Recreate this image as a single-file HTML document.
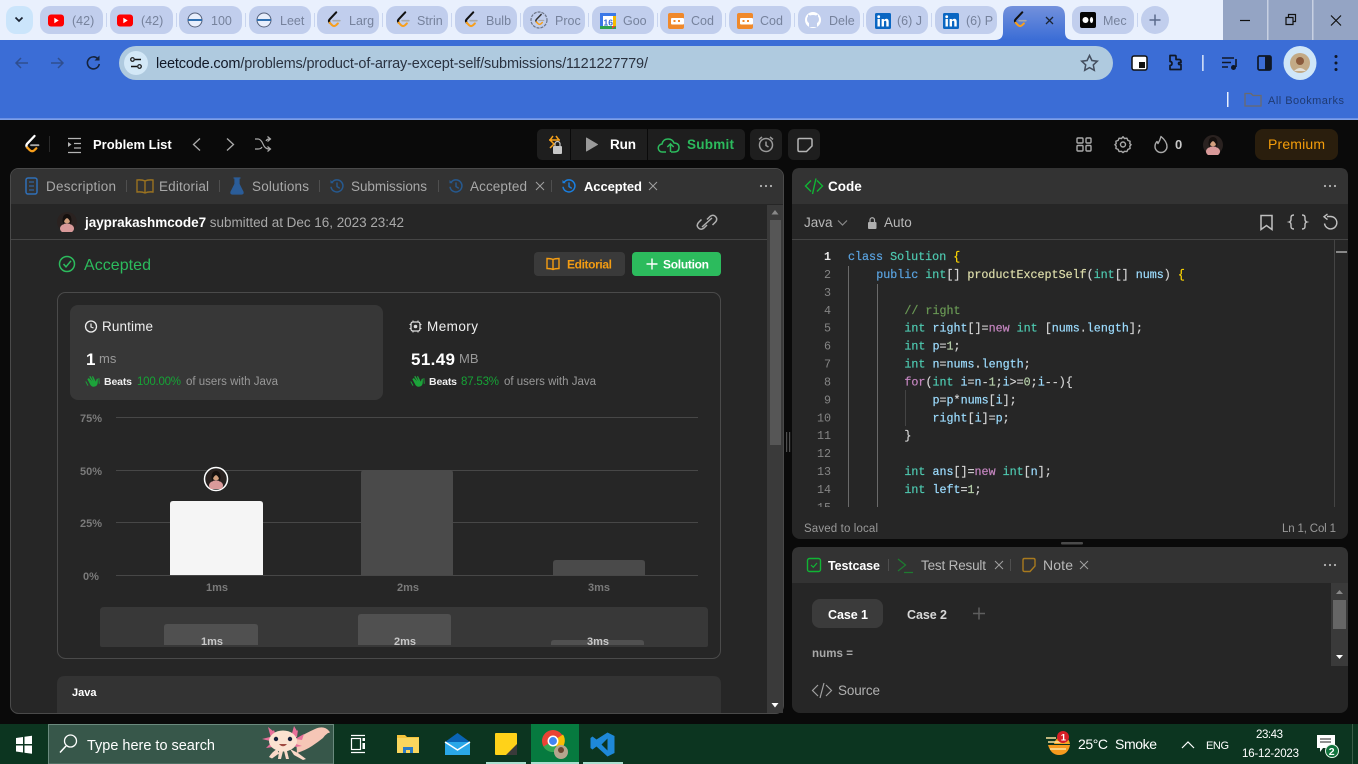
<!DOCTYPE html>
<html lang="en"><head><meta charset="utf-8"><title>Product of Array Except Self - LeetCode</title>
<style>
html,body{margin:0;padding:0;width:1358px;height:764px;overflow:hidden;background:#0a0a0a}
svg{display:block}
text{font-family:"Liberation Sans",sans-serif;white-space:pre}
.tab{font-size:12.5px;fill:#76829c}
.w{fill:#fff}.b{font-weight:700}
.g{fill:#a8a8a8}
.nav{font-size:13.5px}
.ic{fill:none;stroke:#a9a9a9;stroke-width:1.4;stroke-linecap:round;stroke-linejoin:round}
.ax{font-size:11px;fill:#7a7a7a;font-weight:700}
.c{font-family:"Liberation Mono",monospace;font-size:11.7px;fill:#d4d4d4;stroke:#d4d4d4;stroke-width:.2}
.n{font-family:"Liberation Mono",monospace;font-size:11.7px;fill:#858585;text-anchor:end}
.k{fill:#5aa3e0;stroke:#5aa3e0}.t{fill:#4ec9b0;stroke:#4ec9b0}.f{fill:#dcdcaa;stroke:#dcdcaa}.v{fill:#9cdcfe;stroke:#9cdcfe}.p{fill:#c586c0;stroke:#c586c0}.o{fill:#ffd700;stroke:#ffd700}.u{fill:#b5cea8;stroke:#b5cea8}.m{fill:#6a9955;stroke:#6a9955}
.tb{fill:#fff;font-size:14.5px}
</style></head><body>
<svg xmlns="http://www.w3.org/2000/svg" width="1358" height="764" viewBox="0 0 1358 764">
<defs>
<symbol id="yt" viewBox="0 0 16 13"><rect width="16" height="12" y="0.5" rx="3" fill="#f00"/><path d="M6.3 3.8l4.4 2.7-4.4 2.7z" fill="#fff"/></symbol>
<symbol id="ll" viewBox="0 0 16 16"><circle cx="8" cy="8" r="7" fill="#e8eefc" stroke="#56627c" stroke-width="1"/><path d="M1 8h14" stroke="#2f6fb0" stroke-width="2"/></symbol>
<symbol id="lc" viewBox="0 0 20 20"><path d="M12.5 1.5L5.2 9.2Q3.6 11 5.2 13" fill="none" stroke="currentColor" stroke-width="2.3" stroke-linecap="round"/><path d="M5.2 13l2.6 2.7q2.2 2 4.6 0l1.9-1.9" fill="none" stroke="#f89f1b" stroke-width="2.3" stroke-linecap="round"/><path d="M9 10.7h7.5" fill="none" stroke="#a8a8a8" stroke-width="1.8" stroke-linecap="round"/></symbol>
<symbol id="cd" viewBox="0 0 16 16"><rect width="16" height="16" rx="2" fill="#f0892b"/><rect x="3" y="5" width="13" height="6.5" rx="1" fill="#fff"/><rect x="5.5" y="7" width="2" height="2" fill="#f0892b"/><rect x="10" y="7" width="2" height="2" fill="#f0892b"/></symbol>
<symbol id="li" viewBox="0 0 16 16"><rect width="16" height="16" rx="1.5" fill="#0a66c2"/><rect x="2.5" y="6" width="2.4" height="7.5" fill="#fff"/><circle cx="3.7" cy="3.7" r="1.4" fill="#fff"/><path d="M6.6 6h2.3v1.1q.8-1.3 2.4-1.3 2.4 0 2.4 2.9v4.8h-2.4V9.1q0-1.4-1.2-1.4T9 9.1v4.4H6.6z" fill="#fff"/></symbol>
<symbol id="hist" viewBox="0 0 16 16"><path d="M3.2 4.2A6 6 0 1 1 2.1 9.4" fill="none" stroke="currentColor" stroke-width="1.5" stroke-linecap="round"/><path d="M1.5 2v3.2h3.2z" fill="currentColor"/><path d="M8 5v3.6l2.3 1.4" fill="none" stroke="currentColor" stroke-width="1.4" stroke-linecap="round"/></symbol>
<symbol id="x" viewBox="0 0 10 10"><path d="M1 1l8 8M9 1l-8 8" fill="none" stroke="#a0a0a0" stroke-width="1"/></symbol>
<symbol id="dots" viewBox="0 0 14 4"><circle cx="2" cy="2" r="1.1" fill="#b4b4b4"/><circle cx="7" cy="2" r="1.1" fill="#b4b4b4"/><circle cx="12" cy="2" r="1.1" fill="#b4b4b4"/></symbol>
<symbol id="hand" viewBox="0 0 16 16"><path d="M2.500 6.500l3.500 6.500q1.500 2 4 1.500 3-.5 3.500-3.500l.3-5-1.300.2-1 3-3-6-1.100.6 1.800 4.700-3.600-5.500-1.100.8 3 5.200-3.400-3.700z" fill="#1ca43a"/><path d="M.8 9l2.400 4.500M14.800 5.500l.4 6" stroke="#1ca43a" stroke-width="1" fill="none"/></symbol>
<symbol id="ava" viewBox="0 0 20 20"><circle cx="10" cy="10" r="10" fill="#2a2220"/><ellipse cx="10" cy="16.500" rx="7" ry="5" fill="#d99a9a"/><circle cx="10" cy="8" r="3.400" fill="#d3a07e"/><path d="M5.500 9q0-7 4.500-7t4.500 7l-1 4q-.5-6-3.500-7-3 1-3.500 7z" fill="#15100e"/></symbol>
<clipPath id="ce"><rect x="800" y="247" width="534" height="260"/></clipPath>
<clipPath id="lp"><rect x="11" y="205" width="756" height="508"/></clipPath>
<linearGradient id="at" x1="0" y1="0" x2="0" y2="1"><stop offset="0" stop-color="#7391dc"/><stop offset="1" stop-color="#3b6dd6"/></linearGradient>
</defs>

<!-- Browser tab strip -->
<rect width="1358" height="40" fill="#e9f0fd"/>
<rect x="6" y="6" width="27" height="28" rx="10" fill="#cbe5fb"/>
<path d="M15.500 17.500l3.500 3.500 3.500-3.500" fill="none" stroke="#1b2433" stroke-width="1.700"/>
<g fill="#c1ceed">
<rect x="40" y="6" width="63" height="28" rx="10"/><rect x="110" y="6" width="63" height="28" rx="10"/><rect x="179" y="6" width="63" height="28" rx="10"/><rect x="249" y="6" width="62" height="28" rx="10"/><rect x="317" y="6" width="62" height="28" rx="10"/><rect x="386" y="6" width="62" height="28" rx="10"/><rect x="455" y="6" width="62" height="28" rx="10"/><rect x="523" y="6" width="62" height="28" rx="10"/><rect x="592" y="6" width="62" height="28" rx="10"/><rect x="660" y="6" width="62" height="28" rx="10"/><rect x="729" y="6" width="62" height="28" rx="10"/><rect x="798" y="6" width="62" height="28" rx="10"/><rect x="866" y="6" width="62" height="28" rx="10"/><rect x="935" y="6" width="62" height="28" rx="10"/><rect x="1072" y="6" width="62" height="28" rx="10"/><rect x="1141" y="6" width="28" height="28" rx="14"/>
</g>
<use href="#yt" x="48" y="14" width="16" height="13"/><use href="#yt" x="117" y="14" width="16" height="13"/>
<use href="#ll" x="187" y="12" width="16" height="16"/><use href="#ll" x="256" y="12" width="16" height="16"/>
<use href="#lc" x="325" y="10" width="18" height="20" style="color:#111"/><use href="#lc" x="394" y="10" width="18" height="20" style="color:#111"/><use href="#lc" x="462" y="10" width="18" height="20" style="color:#111"/>
<circle cx="539" cy="20" r="8" fill="none" stroke="#6e7688" stroke-width="1.200" stroke-dasharray="3 1"/><use href="#lc" x="533" y="13" width="13" height="14" style="color:#333"/>
<rect x="600" y="13" width="16" height="16" rx="1" fill="#fff"/><path d="M600 13h16v3h-16z" fill="#3b78e7"/><path d="M600 26h16v3h-16z" fill="#2fa24f"/><path d="M612 26h4l-4 3z" fill="#ea4335"/><path d="M600 16h3v10h-3z" fill="#3b78e7"/><path d="M613 16h3v10h-3z" fill="#f7bb00"/><text x="603.500" y="25.500" font-size="8.500" font-weight="700" fill="#3367d6">16</text>
<use href="#cd" x="668" y="13" width="16" height="16"/><use href="#cd" x="737" y="13" width="16" height="16"/>
<circle cx="813" cy="20" r="8" fill="#fff"/><path d="M809 27v-4q-2-1-2-4 0-1.500 1-2.500v-2l2 1q3-1 6 0l2-1v2q1 1 1 2.500 0 3-2 4v4z" fill="#c1ceed"/>
<use href="#li" x="875" y="13" width="16" height="16"/><use href="#li" x="943" y="13" width="16" height="16"/>
<rect x="1080" y="12" width="16" height="16" rx="2" fill="#050505"/><circle cx="1085.500" cy="20" r="3" fill="#fff"/><ellipse cx="1091.500" cy="20" rx="1.600" ry="3" fill="#fff"/>
<text class="tab" x="72" y="25">(42)</text><text class="tab" x="141" y="25">(42)</text><text class="tab" x="211" y="25">100</text><text class="tab" x="280" y="25">Leet</text><text class="tab" x="349" y="25">Larg</text><text class="tab" x="417" y="25">Strin</text><text class="tab" x="486" y="25">Bulb</text><text class="tab" x="555" y="25">Proc</text><text class="tab" x="623" y="25">Goo</text><text class="tab" x="691" y="25">Cod</text><text class="tab" x="760" y="25">Cod</text><text class="tab" x="829" y="25">Dele</text><text class="tab" x="897" y="25">(6) J</text><text class="tab" x="966" y="25">(6) P</text><text class="tab" x="1103" y="25">Mec</text>
<path d="M1155 14.500v11M1149.500 20h11" stroke="#5a6a8c" stroke-width="1.500"/>
<g fill="#c9d5ef"><rect x="106" y="13" width="1" height="14"/><rect x="176" y="13" width="1" height="14"/><rect x="245" y="13" width="1" height="14"/><rect x="314" y="13" width="1" height="14"/><rect x="382" y="13" width="1" height="14"/><rect x="451" y="13" width="1" height="14"/><rect x="520" y="13" width="1" height="14"/><rect x="588" y="13" width="1" height="14"/><rect x="657" y="13" width="1" height="14"/><rect x="725" y="13" width="1" height="14"/><rect x="794" y="13" width="1" height="14"/><rect x="863" y="13" width="1" height="14"/><rect x="931" y="13" width="1" height="14"/><rect x="1137" y="13" width="1" height="14"/></g>
<path d="M995 40Q1003 40 1003 32V16Q1003 6 1013 6H1055Q1065 6 1065 16V32Q1065 40 1073 40Z" fill="url(#at)"/>
<use href="#lc" x="1011" y="10" width="18" height="20" style="color:#111"/>
<path d="M1046 17l7 7M1053 17l-7 7" stroke="#1b2433" stroke-width="1.300"/>
<rect x="1223" y="0" width="135" height="40" fill="#94a4c4"/><rect x="1267" y="0" width="1.500" height="40" fill="#c7d0e2"/><rect x="1312" y="0" width="1.500" height="40" fill="#c7d0e2"/>
<path d="M1240 20.500h10" stroke="#111" stroke-width="1.200"/>
<path d="M1286 17.500h7v7h-7zM1288.500 17v-2.500h7v7h-2.500" fill="none" stroke="#111" stroke-width="1.200"/>
<path d="M1331 15.500l10 10M1341 15.500l-10 10" stroke="#111" stroke-width="1.200"/>

<!-- Toolbar -->
<rect y="40" width="1358" height="80" fill="#3b6dd6"/><rect y="118" width="1358" height="1" fill="#6b90e4"/><rect y="119" width="1358" height="1" fill="#7d9fe8"/>
<path d="M28 63H16m5-5l-5 5 5 5M51 63h12m-5-5l5 5-5 5" fill="none" stroke="#2f4e8e" stroke-width="1.500"/>
<path d="M98 59a6 6 0 1 0 1.300 5" fill="none" stroke="#15233d" stroke-width="1.600"/><path d="M99.500 55.500v5h-5z" fill="#15233d"/>
<rect x="119" y="46" width="994" height="34" rx="17" fill="#afcadf"/>
<circle cx="136" cy="63" r="12" fill="#d3e8f7"/>
<path d="M135 59.500h6M131 66.500h6" stroke="#111" stroke-width="1.500"/><circle cx="132.500" cy="59.500" r="1.800" fill="none" stroke="#111" stroke-width="1.200"/><circle cx="139.500" cy="66.500" r="1.800" fill="none" stroke="#111" stroke-width="1.200"/>
<text x="156" y="68" font-size="14.500" fill="#2a3240" textLength="492"><tspan fill="#111827">leetcode.com</tspan>/problems/product-of-array-except-self/submissions/1121227779/</text>
<path d="M1089.500 55.500l2.400 5 5.400.7-4 3.700 1 5.400-4.800-2.700-4.800 2.700 1-5.400-4-3.700 5.400-.7z" fill="none" stroke="#444e5e" stroke-width="1.500"/>
<rect x="1132" y="56" width="15" height="14" rx="2" fill="#fff" stroke="#111" stroke-width="1.500"/><rect x="1139" y="62" width="6" height="6" fill="#111"/>
<path d="M1170 55.500h5q1 0 1 1v3h3q2 0 2 2v1h-2q-1 1 0 2h2v5h-11v-4q2 0 2-2t-2-2z" fill="none" stroke="#0f1726" stroke-width="1.700" stroke-linejoin="round"/>
<rect x="1202" y="55" width="1.700" height="16" fill="#c8d8f5"/>
<path d="M1222 58h12M1222 62.500h9M1222 67h6M1236 59v8" stroke="#0f1726" stroke-width="1.600" fill="none"/><circle cx="1233.500" cy="67.500" r="2.500" fill="#0f1726"/>
<rect x="1258" y="56" width="13" height="14" rx="1.500" fill="none" stroke="#0f1726" stroke-width="1.700"/><rect x="1265" y="56" width="6" height="14" fill="#0f1726"/>
<ellipse cx="1300" cy="63" rx="16.500" ry="17" fill="#cfe6f8"/><circle cx="1300" cy="63" r="10" fill="#c3aa86"/><circle cx="1300" cy="61" r="4" fill="#8a5a3c"/><path d="M1294 71q6-6 12 0z" fill="#e3e0d8"/>
<circle cx="1336" cy="56.500" r="1.500" fill="#0f1726"/><circle cx="1336" cy="63" r="1.500" fill="#0f1726"/><circle cx="1336" cy="69.500" r="1.500" fill="#0f1726"/>
<rect x="1227" y="92" width="1.500" height="15" fill="#e8effd"/>
<path d="M1245 93.500h6l2 2h8v10.500h-16z" fill="none" stroke="#6a6a6e" stroke-width="1.300"/>
<text x="1268" y="104" font-size="11" fill="#1f3a72" textLength="76">All Bookmarks</text>

<!-- LeetCode nav -->
<rect y="120" width="1358" height="604" fill="#0a0a0a"/>
<use href="#lc" x="22" y="134" width="20" height="21" style="color:#fff"/>
<rect x="49" y="136" width="1" height="16" fill="#2a2a2a"/>
<path d="M68 138.500h13M74 143.500h7M74 148h7M68 152.500h13" stroke="#b5b5b5" stroke-width="1.300" fill="none"/><path d="M68 142v5l3.500-2.500z" fill="#b5b5b5"/>
<text x="93" y="149" font-size="13" font-weight="700" fill="#fff">Problem List</text>
<path d="M200 138.500l-6.500 6 6.500 6M227 138.500l6.500 6-6.500 6" fill="none" stroke="#aaa" stroke-width="1.300"/>
<path d="M255 139h3q2 0 4 3l2 4q2 3 5 3h1M255 149h3q3 0 4-2M266 141q1-2 3-2h1M267.500 136.500l3 2.500-3 2.500M267.500 146.500l3 2.500-3 2.500" fill="none" stroke="#aaa" stroke-width="1.200"/>
<rect x="537" y="129" width="208" height="31" rx="5" fill="#1e1e1e"/><rect x="570" y="129" width="1" height="31" fill="#0a0a0a"/><rect x="647" y="129" width="1" height="31" fill="#0a0a0a"/>
<path d="M553 136l-3 4 4 4-4 4M556 136l3 4M549 140h11" fill="none" stroke="#f5a01a" stroke-width="1.500"/><rect x="553" y="146" width="9" height="8" rx="1" fill="#c8c8c8"/><path d="M555 146v-2a2.500 2.500 0 0 1 5 0v2" fill="none" stroke="#c8c8c8" stroke-width="1.200"/>
<path d="M586.500 138l11 6.500-11 6.500z" fill="#9a9a9a" stroke="#9a9a9a" stroke-linejoin="round"/>
<text x="610" y="149" font-size="13.500" font-weight="700" fill="#fff" textLength="26">Run</text>
<path d="M666 152h-3.500a4 4 0 0 1-.5-8q1-5 6-5 4.500 0 6 4 5 0 5 4.500 0 4.500-5 4.500h-3" fill="none" stroke="#2cbb5d" stroke-width="1.500"/><path d="M670.500 152v-8M667.300 147l3.200-3.200 3.200 3.200" fill="none" stroke="#2cbb5d" stroke-width="1.500"/>
<text x="687" y="149" font-size="13.500" font-weight="700" fill="#2cbb5d" textLength="47">Submit</text>
<rect x="750" y="129" width="32" height="31" rx="6" fill="#1e1e1e"/>
<circle cx="766" cy="145" r="6.500" fill="none" stroke="#9a9a9a" stroke-width="1.500"/><path d="M766 141.500v4l2.500 1.500M759 139.500l3-2.500M773 139.500l-3-2.500" fill="none" stroke="#9a9a9a" stroke-width="1.500"/>
<rect x="788" y="129" width="32" height="31" rx="6" fill="#1e1e1e"/>
<path d="M799.500 138.500h11q1.500 0 1.500 1.500v6l-5.500 5.500h-7q-1.500 0-1.500-1.500v-10q0-1.500 1.500-1.500z" fill="none" stroke="#b5b5b5" stroke-width="1.500"/>
<rect x="1077" y="138" width="6" height="5" rx="1" class="ic"/><rect x="1086" y="138" width="5" height="5" rx="1" class="ic"/><rect x="1077" y="145.500" width="6" height="5.500" rx="1" class="ic"/><rect x="1086" y="145.500" width="5" height="5.500" rx="1" class="ic"/>
<path d="M1123 137l1.500 1.800 2.400-.3 1 2.200 2.200.9-.3 2.400 1.300 1-1.300 1.400.3 2.400-2.200.9-1 2.200-2.400-.3-1.500 1.300-1.500-1.300-2.400.3-1-2.200-2.200-.9.3-2.400-1.300-1.400 1.300-1-.3-2.400 2.200-.9 1-2.200 2.400.3z" class="ic" transform="translate(0 -.3)"/><circle cx="1123" cy="144.500" r="2.500" class="ic"/>
<path d="M1161 136.500q6 5 6 10a6 6 0 0 1-12 0q0-3 2-5l1 2q2-3 3-7z" class="ic"/>
<text x="1175" y="149" font-size="13" font-weight="700" fill="#c8c8c8">0</text>
<use href="#ava" x="1203" y="135" width="20" height="20"/>
<rect x="1255" y="129" width="83" height="31" rx="8" fill="#2a1e0d"/>
<text x="1268" y="149" font-size="14" fill="#f59e0b" textLength="57">Premium</text>

<!-- Left panel -->
<rect x="10.500" y="168.500" width="773" height="545" rx="8" fill="#262626" stroke="#4a4a4a"/>
<path d="M11 204V177q0-8 8-8H775q8 0 8 8V204z" fill="#333"/>
<rect x="26" y="178" width="11" height="16" rx="2" fill="none" stroke="#2f6fb8" stroke-width="1.500"/><path d="M29 182h5M29 186h5M29 190h5" stroke="#2f6fb8"/>
<text class="nav g" x="46" y="191" textLength="70">Description</text>
<rect x="126" y="180" width="1" height="12" fill="#4f4f4f"/>
<path d="M145 181q-3-1.500-8-1v12q5-.5 8 1 3-1.500 8-1v-12q-5-.5-8 1zM145 181v12" fill="none" stroke="#9a7220" stroke-width="1.400"/>
<text class="nav g" x="159" y="191" textLength="50">Editorial</text>
<rect x="219" y="180" width="1" height="12" fill="#4f4f4f"/>
<path d="M235 178v6l-4 8q-.5 2 1.500 2h9q2 0 1.500-2l-4-8v-6zM233.500 178h7" fill="#2b5d99" stroke="#2b5d99" stroke-width="1.200"/>
<text class="nav g" x="252" y="191" textLength="57">Solutions</text>
<rect x="319" y="180" width="1" height="12" fill="#4f4f4f"/>
<use href="#hist" x="329" y="178" width="16" height="16" style="color:#26598f"/>
<text class="nav g" x="351" y="191" textLength="76">Submissions</text>
<rect x="438" y="180" width="1" height="12" fill="#4f4f4f"/>
<use href="#hist" x="448" y="178" width="16" height="16" style="color:#26598f"/>
<text class="nav g" x="470" y="191" textLength="57">Accepted</text>
<use href="#x" x="535" y="181" width="10" height="10"/>
<rect x="551" y="180" width="1" height="12" fill="#4f4f4f"/>
<use href="#hist" x="561" y="178" width="16" height="16" style="color:#1a7fe0"/>
<text class="w b" x="584" y="191" font-size="13" textLength="58">Accepted</text>
<use href="#x" x="648" y="181" width="10" height="10"/>
<use href="#dots" x="759" y="184" width="14" height="4"/>

<g clip-path="url(#lp)">
<use href="#ava" x="57" y="212" width="20" height="20"/>
<text x="85" y="227" font-size="13.500" fill="#a9a9a9" textLength="319"><tspan fill="#fff" font-weight="700">jayprakashmcode7</tspan> submitted at Dec 16, 2023 23:42</text>
<path d="M707 219.500l3-3q3-2.500 5.500 0t0 5.500l-3 3M707 225l-3 3q-3 2.500-5.500 0t0-5.500l3-3M702 227l10-9" fill="none" stroke="#b0b0b0" stroke-width="1.500"/>
<rect x="11" y="239" width="756" height="1" fill="#454545"/>

<circle cx="67" cy="264" r="7.500" fill="none" stroke="#2cbb5d" stroke-width="1.500"/><path d="M63.500 264l2.500 2.800 5-6" fill="none" stroke="#2cbb5d" stroke-width="1.500"/>
<text x="84" y="270" font-size="16" fill="#2cbb5d" textLength="67">Accepted</text>
<rect x="534" y="252" width="91" height="24" rx="4" fill="#3a3a3a"/>
<path d="M553 259.500q-2-1-6-1v10q4 0 6 1 2-1 6-1v-10q-4 0-6 1zM553 259.500v10" fill="none" stroke="#f39c12" stroke-width="1.400"/>
<text x="567" y="268.500" font-size="12" font-weight="700" fill="#f39c12" textLength="45">Editorial</text>
<rect x="632" y="252" width="89" height="24" rx="4" fill="#2cbb5d"/>
<path d="M652 258.500v11M646.500 264h11" stroke="#fff" stroke-width="1.400"/>
<text x="663" y="268.500" font-size="12" font-weight="700" fill="#fff" textLength="46">Solution</text>

<rect x="57.500" y="292.500" width="663" height="366" rx="8" fill="#262626" stroke="#4a4a4a"/>
<rect x="70" y="305" width="313" height="95" rx="8" fill="#373737"/>
<circle cx="91" cy="326.500" r="5.500" fill="none" stroke="#eee" stroke-width="1.300"/><path d="M91 323.500v3.500l2.500 1" fill="none" stroke="#eee" stroke-width="1.200"/>
<text x="102" y="331" font-size="13.500" fill="#eee" textLength="51">Runtime</text>
<text x="86" y="365" font-size="17" font-weight="700" fill="#fff">1</text>
<text x="99" y="363" font-size="13" fill="#999">ms</text>
<use href="#hand" x="85" y="373" width="15" height="15"/>
<text x="104" y="385" font-size="10.500" font-weight="700" fill="#eee" textLength="28">Beats</text>
<text x="137" y="385" font-size="11.500" fill="#16a336" textLength="44">100.00%</text>
<text x="186" y="385" font-size="11.500" fill="#999" textLength="92">of users with Java</text>
<rect x="411" y="322" width="9" height="9" rx="2" fill="none" stroke="#ddd" stroke-width="1.300"/><circle cx="415.500" cy="326.500" r="1.800" fill="#ddd"/><path d="M413 320.500v1M418 320.500v1M413 331.500v1M418 331.500v1M409.500 324.500h1M409.500 328.500h1M420.500 324.500h1M420.500 328.500h1" stroke="#ddd"/>
<text x="427" y="331" font-size="13.500" fill="#eee" textLength="51">Memory</text>
<text x="411" y="365" font-size="17" font-weight="700" fill="#fff" textLength="44">51.49</text>
<text x="459" y="363" font-size="13" fill="#999">MB</text>
<use href="#hand" x="410" y="373" width="15" height="15"/>
<text x="429" y="385" font-size="10.500" font-weight="700" fill="#eee" textLength="28">Beats</text>
<text x="461" y="385" font-size="11.500" fill="#16a336" textLength="38">87.53%</text>
<text x="504" y="385" font-size="11.500" fill="#999" textLength="92">of users with Java</text>

<g fill="#474747"><rect x="116" y="417" width="582" height="1"/><rect x="116" y="470" width="582" height="1"/><rect x="116" y="522" width="582" height="1"/><rect x="116" y="575" width="582" height="1"/></g>
<text class="ax" x="80" y="422">75%</text><text class="ax" x="80" y="475">50%</text><text class="ax" x="80" y="527">25%</text><text class="ax" x="83" y="580">0%</text>
<path d="M170 575V504q0-3 3-3H260q3 0 3 3V575z" fill="#f5f5f5"/>
<path d="M361 575V473q0-3 3-3H450q3 0 3 3V575z" fill="#4a4a4a"/>
<path d="M553 575V563q0-3 3-3H642q3 0 3 3V575z" fill="#4a4a4a"/>
<text class="ax" x="206" y="591">1ms</text><text class="ax" x="397" y="591">2ms</text><text class="ax" x="588" y="591">3ms</text>
<circle cx="216" cy="479" r="11.500" fill="#222" stroke="#fff" stroke-width="1.500"/><use href="#ava" x="206" y="469" width="20" height="20"/>
<path d="M100 645V611q0-4 4-4H704q4 0 4 4V645q0 2-2 2H102q-2 0-2-2z" fill="#383838"/>
<path d="M164 645V627q0-3 3-3H255q3 0 3 3V645z" fill="#505050"/>
<path d="M358 645V617q0-3 3-3H448q3 0 3 3V645z" fill="#505050"/>
<path d="M551 645V643q0-3 3-3H641q3 0 3 3V645z" fill="#505050"/>
<text x="201" y="645" font-size="11" font-weight="700" fill="#c8c8c8">1ms</text><text x="394" y="645" font-size="11" font-weight="700" fill="#c8c8c8">2ms</text><text x="587" y="645" font-size="11" font-weight="700" fill="#c8c8c8">3ms</text>
<path d="M57 714V684q0-8 8-8H713q8 0 8 8V714z" fill="#333"/>
<text x="72" y="696" font-size="11" font-weight="700" fill="#fff">Java</text>
</g>
<rect x="767" y="205" width="16" height="508" fill="#3a3a3a"/><rect x="770" y="220" width="11" height="225" fill="#565656"/>
<path d="M775 210l-3.500 4.500h7z" fill="#888"/><path d="M771.500 703h7l-3.500 4.500z" fill="#fff"/>
<rect x="786" y="432" width="1.200" height="20" fill="#4f4f4f"/><rect x="789" y="432" width="1.200" height="20" fill="#4f4f4f"/>

<!-- Code panel -->
<rect x="792" y="168" width="556" height="371" rx="8" fill="#262626"/>
<path d="M792 204V176q0-8 8-8H1340q8 0 8 8V204z" fill="#333"/>
<path d="M810 180.500l-5.500 5.500 5.500 5.500M816 180.500l5.500 5.500-5.500 5.500M815 178.500l-3.500 15.500" fill="none" stroke="#10b534" stroke-width="1.400" transform="translate(1 0)"/>
<text x="828" y="191" font-size="13.500" font-weight="700" fill="#fff">Code</text>
<use href="#dots" x="1323" y="184" width="14" height="4"/>
<text x="804" y="227" font-size="13.500" fill="#b8b8b8">Java</text>
<path d="M838 220.500l4.500 4.500 4.500-4.500" fill="none" stroke="#888" stroke-width="1.200"/>
<rect x="868" y="222" width="8.500" height="7" rx="1" fill="#b0b0b0"/><path d="M870 222v-2a2.200 2.200 0 0 1 4.500 0v2" fill="none" stroke="#b0b0b0" stroke-width="1.200"/>
<text x="884" y="227" font-size="13.500" fill="#b8b8b8">Auto</text>
<path d="M1261 215.500h11v14l-5.500-4-5.500 4z" fill="none" stroke="#c0c0c0" stroke-width="1.500"/>
<path d="M1294 215q-3 0-3 2.500v2q0 2-1.800 2.500 1.800.5 1.800 2.500v2q0 2.500 3 2.500M1302 215q3 0 3 2.500v2q0 2 1.800 2.500-1.800.5-1.800 2.500v2q0 2.500-3 2.500" fill="none" stroke="#c0c0c0" stroke-width="1.400"/>
<path d="M1327 216.500h3.500a6.200 6.200 0 1 1-6 7" fill="none" stroke="#c0c0c0" stroke-width="1.400"/><path d="M1327.500 214l-3.500 2.800 3.500 2.800" fill="none" stroke="#c0c0c0" stroke-width="1.400"/>
<rect x="792" y="239" width="556" height="1" fill="#444"/>
<rect x="1334" y="240" width="1" height="267" fill="#444"/><rect x="1336" y="251" width="11" height="2" fill="#888"/>

<g fill="#6a6a6a"><rect x="848" y="266" width="1" height="241"/><rect x="877" y="284" width="1" height="223"/><rect x="905" y="390" width="1" height="36" fill="#444"/></g>
<g clip-path="url(#ce)">
<text class="n" x="831" y="260" style="fill:#e8e8e8;font-weight:700">1</text><text class="n" x="831" y="277.900">2</text><text class="n" x="831" y="295.800">3</text><text class="n" x="831" y="313.800">4</text><text class="n" x="831" y="331.700">5</text><text class="n" x="831" y="349.600">6</text><text class="n" x="831" y="367.500">7</text><text class="n" x="831" y="385.400">8</text><text class="n" x="831" y="403.400">9</text><text class="n" x="831" y="421.300">10</text><text class="n" x="831" y="439.200">11</text><text class="n" x="831" y="457.100">12</text><text class="n" x="831" y="475">13</text><text class="n" x="831" y="493">14</text><text class="n" x="831" y="510.900">15</text>
<text class="c" x="848" y="260"><tspan class="k">class</tspan> <tspan class="t">Solution</tspan> <tspan class="o">{</tspan></text>
<text class="c" x="876.200" y="277.900"><tspan class="k">public</tspan> <tspan class="t">int</tspan><tspan>[]</tspan> <tspan class="f">productExceptSelf</tspan>(<tspan class="t">int</tspan>[] <tspan class="v">nums</tspan>) <tspan class="o">{</tspan></text>
<text class="c" x="904.400" y="313.800"><tspan class="m">// right</tspan></text>
<text class="c" x="904.400" y="331.700"><tspan class="t">int</tspan> <tspan class="v">right</tspan>[]=<tspan class="p">new</tspan> <tspan class="t">int</tspan> [<tspan class="v">nums</tspan>.<tspan class="v">length</tspan>];</text>
<text class="c" x="904.400" y="349.600"><tspan class="t">int</tspan> <tspan class="v">p</tspan>=<tspan class="u">1</tspan>;</text>
<text class="c" x="904.400" y="367.500"><tspan class="t">int</tspan> <tspan class="v">n</tspan>=<tspan class="v">nums</tspan>.<tspan class="v">length</tspan>;</text>
<text class="c" x="904.400" y="385.400"><tspan class="p">for</tspan>(<tspan class="t">int</tspan> <tspan class="v">i</tspan>=<tspan class="v">n</tspan>-<tspan class="u">1</tspan>;<tspan class="v">i</tspan>&gt;=<tspan class="u">0</tspan>;<tspan class="v">i</tspan>--){</text>
<text class="c" x="932.500" y="403.400"><tspan class="v">p</tspan>=<tspan class="v">p</tspan>*<tspan class="v">nums</tspan>[<tspan class="v">i</tspan>];</text>
<text class="c" x="932.500" y="421.300"><tspan class="v">right</tspan>[<tspan class="v">i</tspan>]=<tspan class="v">p</tspan>;</text>
<text class="c" x="904.400" y="439.200">}</text>
<text class="c" x="904.400" y="475"><tspan class="t">int</tspan> <tspan class="v">ans</tspan>[]=<tspan class="p">new</tspan> <tspan class="t">int</tspan>[<tspan class="v">n</tspan>];</text>
<text class="c" x="904.400" y="493"><tspan class="t">int</tspan> <tspan class="v">left</tspan>=<tspan class="u">1</tspan>;</text>
</g>
<text x="804" y="532" font-size="11.500" fill="#999" textLength="74">Saved to local</text>
<text x="1282" y="532" font-size="11.500" fill="#999" textLength="54">Ln 1, Col 1</text>
<rect x="1061" y="542" width="22" height="2.500" rx="1" fill="#4a4a4a"/>

<!-- Testcase panel -->
<rect x="792" y="547" width="556" height="166" rx="8" fill="#262626"/>
<path d="M792 583V555q0-8 8-8H1340q8 0 8 8V583z" fill="#333"/>
<rect x="807.500" y="558.500" width="13" height="13" rx="2" fill="none" stroke="#10b534" stroke-width="1.400"/><path d="M811 565l2.300 2.300 3.700-4.300" fill="none" stroke="#10b534" stroke-width="1.200"/>
<text x="828" y="570" font-size="12.500" font-weight="700" fill="#fff" textLength="52">Testcase</text>
<rect x="888" y="559" width="1" height="12" fill="#4f4f4f"/>
<path d="M898 559l7.500 6-7.500 6M904 572.500h9" fill="none" stroke="#1e7a30" stroke-width="1.300"/>
<text x="921" y="570" font-size="13.500" fill="#b8b8b8" textLength="65">Test Result</text>
<use href="#x" x="994" y="560" width="10" height="10"/>
<rect x="1010" y="559" width="1" height="12" fill="#4f4f4f"/>
<path d="M1024.500 558.500h9q1.500 0 1.500 1.500v6l-5 5.500h-5.500q-1.500 0-1.500-1.500v-10q0-1.500 1.500-1.500z" fill="none" stroke="#a87a1e" stroke-width="1.400"/>
<text x="1043" y="570" font-size="14" fill="#b8b8b8" textLength="30">Note</text>
<use href="#x" x="1079" y="560" width="10" height="10"/>
<use href="#dots" x="1323" y="563" width="14" height="4"/>
<rect x="812" y="599" width="71" height="29" rx="8" fill="#3b3b3b"/>
<text x="828" y="619" font-size="12.500" font-weight="700" fill="#fff" textLength="40">Case 1</text>
<text x="907" y="619" font-size="12.500" font-weight="700" fill="#d8d8d8" textLength="40">Case 2</text>
<path d="M979 607.500v12M973 613.500h12" stroke="#5e5e5e" stroke-width="1.500"/>
<text x="812" y="657" font-size="11.500" font-weight="700" fill="#a8a8a8" textLength="41">nums =</text>
<path d="M818 685l-5.500 5.500 5.500 5.500M826 685l5.500 5.500-5.500 5.500M824 683l-4 15" fill="none" stroke="#a0a0a0" stroke-width="1.200"/>
<text x="838" y="695" font-size="13.500" fill="#b0b0b0" textLength="42">Source</text>
<rect x="1331" y="583" width="17" height="83" fill="#3a3a3a"/><rect x="1333" y="600" width="13" height="29" fill="#666"/>
<path d="M1339.500 590l-3.500 4h7z" fill="#888"/><path d="M1336 655h7l-3.500 4z" fill="#fff"/>

<!-- Windows taskbar -->
<rect y="724" width="1358" height="40" fill="#0c3520"/>
<path d="M16 738l7-1v7h-7zM24.500 736.800l7.500-1v8.200h-7.500zM16 745.500h7v7l-7-1zM24.500 745.500H32v8.200l-7.500-1z" fill="#fff"/>
<rect x="48.500" y="724.500" width="285" height="39.500" fill="#37574a" stroke="#6b8a7e"/>
<circle cx="70.500" cy="741" r="6" fill="none" stroke="#fff" stroke-width="1.300"/><path d="M66 746l-6 6.500" stroke="#fff" stroke-width="1.500"/>
<text class="tb" x="87" y="750" textLength="128">Type here to search</text>
<!-- axolotl -->
<path d="M296 739Q306 733 315 729T329 731Q331 733 328 733 325 735 323 738 318 742 312 746T297 753z" fill="#f6c6b6"/>
<path d="M271 738l-3-11 5 4 1-1 2 6zM270 741l-8-2 8-2zM270 744l-4 4 7-1zM291 737l3-11 3 5 1-1-1 7zM295 739l9-5-2 6zM296 744l6 2-7 1z" fill="#e8709a"/>
<path d="M277 749q-5 3-8 8l3 1.500 7-5zM290 749l8 4 8 6-3 1-9-5zM279 751l-1 8h3l2-8zM287 751l2 8h-3l-2-8z" fill="#fbd9c8"/>
<ellipse cx="283" cy="741" rx="14" ry="10.500" fill="#fbe2d0"/>
<circle cx="276" cy="739" r="2.200" fill="#14203c"/><circle cx="290" cy="739" r="2.200" fill="#14203c"/>
<path d="M279 744q4 4.500 8 0z" fill="#a04a40"/>

<path d="M351 735.500h14M351 752.500h14" stroke="#fff" stroke-width="1.200" fill="none"/><rect x="351.500" y="738.500" width="9" height="11" fill="none" stroke="#fff" stroke-width="1.200"/><rect x="362.500" y="738" width="2.500" height="3" fill="#fff"/><rect x="362.500" y="743" width="2.500" height="6" fill="#fff"/>
<path d="M397 735h8l2 2h12v16h-22z" fill="#f5c33b"/><rect x="397" y="738" width="22" height="15" fill="#fad65e"/><path d="M403 753v-6h10v6h-3v-3h-4v3z" fill="#2a7bc6"/>
<path d="M445 742l12.500-9 12.500 9v13h-25z" fill="#0a64b5"/><rect x="445" y="742" width="25" height="13" fill="#2aa7e8"/><path d="M445 742l12.500 8 12.500-8" fill="none" stroke="#fff" stroke-width="1.500"/>
<rect x="495" y="733" width="22" height="22" rx="1" fill="#ffd219"/><path d="M517 744v11h-11z" fill="#3a3a3a"/>
<rect x="531" y="724" width="48" height="38" fill="#067a3f"/>
<circle cx="553" cy="741" r="11" fill="#ea4335"/><path d="M553 741L543.500 746.500A11 11 0 0 0 559 750.300z" fill="#34a853"/><path d="M553 741l6 9.300a11 11 0 0 0 4-15.800z" fill="#fbbc05"/><circle cx="553" cy="741" r="4.700" fill="#4285f4" stroke="#fff" stroke-width="1.500"/>
<circle cx="561" cy="752" r="7" fill="#b6a58e"/><circle cx="561" cy="750" r="3" fill="#6a4630"/>
<path d="M607 733l7 3.500v17l-7 3.500-11-10-4 3-2-1.500v-10l2-1.500 4 3zM607 739l-6 6 6 6z" fill="#1e88d8" fill-rule="evenodd" transform="translate(.5 -.500)"/>
<g fill="#a9e0d0"><rect x="486" y="762" width="40" height="2"/><rect x="531" y="762" width="48" height="2"/><rect x="583" y="762" width="40" height="2"/></g>

<path d="M1048 745h22q-2 10-11 10-8 0-11-10z" fill="#f79a1e"/><path d="M1054 744q2-8 10-7 5 1 6 7z" fill="#f5a623"/><path d="M1046 738h10M1048 742h18M1050 749h16" stroke="#fbe29c" stroke-width="1.500"/>
<circle cx="1063" cy="737" r="6" fill="#d71f26"/><text x="1060.800" y="740.500" font-size="9.500" font-weight="700" fill="#fff">1</text>
<text x="1078" y="749" font-size="14" fill="#fff" textLength="30">25°C</text>
<text x="1115" y="749" font-size="14" fill="#fff" textLength="42">Smoke</text>
<path d="M1182 748l6-6 6 6" fill="none" stroke="#fff" stroke-width="1.200"/>
<text x="1206" y="749" font-size="11" fill="#fff" textLength="23">ENG</text>
<text x="1256" y="738" font-size="11.500" fill="#fff" textLength="27">23:43</text>
<text x="1242" y="757" font-size="11.500" fill="#fff" textLength="57">16-12-2023</text>
<path d="M1317 735h18v13h-12l-3 4v-4h-3z" fill="#fff"/><path d="M1320 739h11M1320 742h11" stroke="#222" stroke-width="1"/>
<circle cx="1332" cy="751" r="6.500" fill="#11733d" stroke="#e8f4ea" stroke-width="1"/><text x="1328.800" y="755" font-size="10.500" font-weight="700" fill="#fff">2</text>
<rect x="1352" y="724" width="1" height="40" fill="#3a5c48"/>
</svg>
</body></html>
